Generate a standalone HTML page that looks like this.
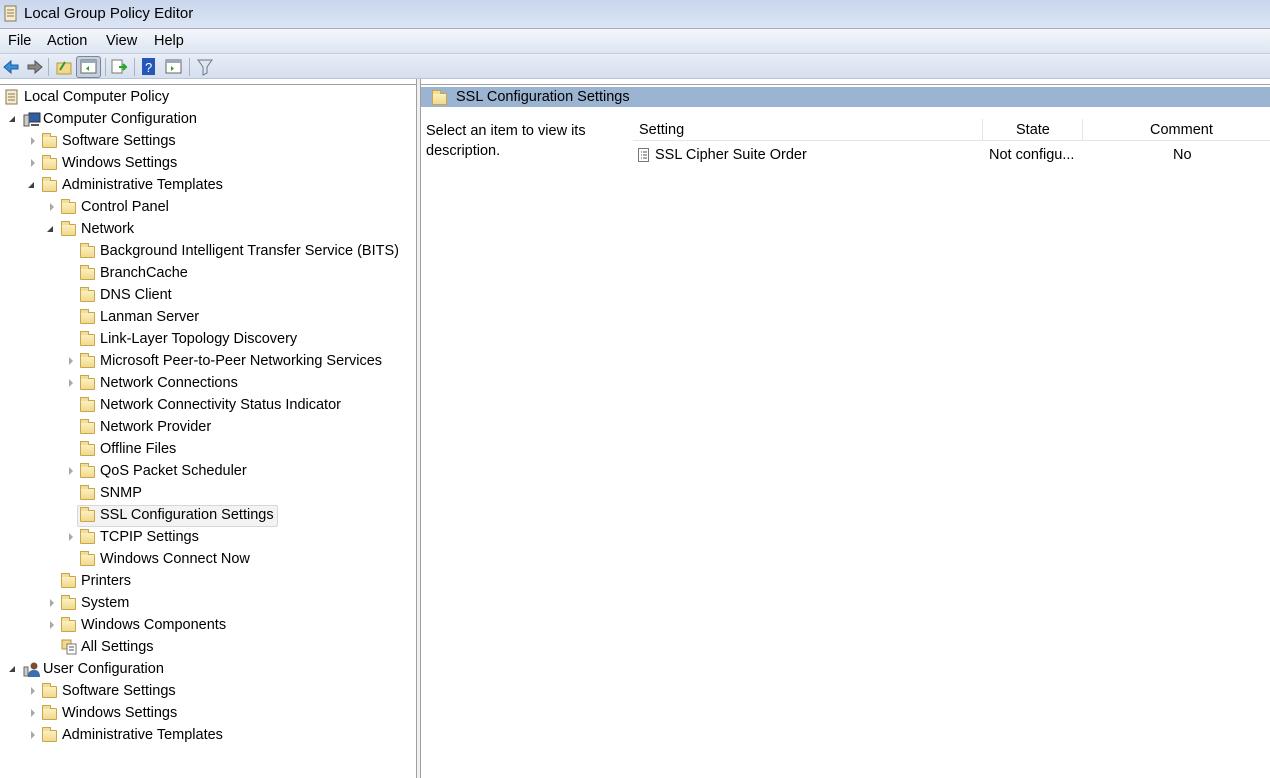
<!DOCTYPE html>
<html><head><style>
*{margin:0;padding:0;box-sizing:border-box}
body{width:1270px;height:778px;overflow:hidden;background:#fff;font-family:"Liberation Sans",sans-serif;font-size:14.5px;color:#000;position:relative}
.title{position:absolute;left:0;top:0;width:1270px;height:28px;background:linear-gradient(#c9d6ec,#dbe5f5);}
.title span{position:absolute;left:24px;top:5px;font-size:15px}
.menu{position:absolute;left:0;top:28px;width:1270px;height:25px;background:linear-gradient(#f4f7fc,#dde5f1);border-top:1px solid #aab;}
.menu span{position:absolute;top:4px}
.tool{position:absolute;left:0;top:53px;width:1270px;height:26px;background:linear-gradient(#e9eef7,#d6dfee);border-top:1px solid #c4cede;border-bottom:1px solid #b9c4d6}
.sep{position:absolute;top:4px;width:1px;height:18px;background:#a8b3c4}
.left{position:absolute;left:0;top:84px;width:416px;height:694px;background:#fff;border-top:1px solid #a0a0a0}
.split{position:absolute;left:416px;top:79px;width:5px;height:699px;background:#f0f0f0;border-left:1px solid #a0a0a0;border-right:1px solid #a0a0a0}
.right{position:absolute;left:421px;top:84px;width:849px;height:694px;background:#fff;border-top:1px solid #a0a0a0}
.hdr{position:absolute;left:0;top:2px;width:849px;height:20px;background:#9ab4d1}
.row{position:absolute;height:22px;line-height:22px;white-space:nowrap}
.f{position:absolute;width:15px;height:12px;background:linear-gradient(#fcf0c0,#f1d98d);border:1px solid #c9a64c;border-radius:1px}
.f:before{content:"";position:absolute;left:-1px;top:-4px;width:7px;height:3px;background:#f1dd9c;border:1px solid #c9a64c;border-bottom:none}
.ac{position:absolute;width:0;height:0;border-top:4px solid transparent;border-bottom:4px solid transparent;border-left:4px solid #a8a8a8}
.ae{position:absolute;width:0;height:0;border-left:6px solid transparent;border-bottom:6px solid #404040}
</style></head><body>
<div class="title">
<svg style="position:absolute;left:3px;top:5px" width="16" height="18"><rect x="2" y="1" width="11" height="15" fill="#f6edd0" stroke="#8a7850"/><path d="M4 5h7M4 8h7M4 11h7" stroke="#8a7850"/></svg>
<span>Local Group Policy Editor</span></div>
<div class="menu"><span style="left:8px">File</span><span style="left:47px">Action</span><span style="left:106px">View</span><span style="left:154px">Help</span></div>
<div class="tool">
<svg style="position:absolute;left:2px;top:4px" width="42" height="18"><path d="M2 9l7-6v4h7v4H9v4z" fill="#3a8fd9" stroke="#1e5e9e"/><path d="M40 9l-7-6v4h-7v4h7v4z" fill="#888" stroke="#555"/></svg>
<div class="sep" style="left:48px"></div>
<svg style="position:absolute;left:55px;top:4px" width="18" height="18"><rect x="2" y="5" width="14" height="11" fill="#f2d88a" stroke="#b9963e"/><path d="M5 12l5-8" stroke="#2b9b2b" stroke-width="2"/></svg>
<div style="position:absolute;left:76px;top:2px;width:25px;height:22px;border:1px solid #7a8599;border-radius:3px;background:#c5cfe0"></div>
<svg style="position:absolute;left:80px;top:5px" width="18" height="16"><rect x="1" y="1" width="15" height="13" fill="#fff" stroke="#666"/><rect x="1" y="1" width="15" height="3" fill="#9ab"/><path d="M9 7l-3 2.5 3 2.5z" fill="#2a2"/></svg>
<div class="sep" style="left:105px"></div>
<svg style="position:absolute;left:110px;top:4px" width="18" height="18"><rect x="2" y="2" width="10" height="13" fill="#fff" stroke="#777"/><path d="M9 9h7M13 6l3 3-3 3" stroke="#2a2" stroke-width="2" fill="none"/></svg>
<div class="sep" style="left:134px"></div>
<svg style="position:absolute;left:141px;top:3px" width="16" height="20"><rect x="1" y="1" width="13" height="17" fill="#2457b8"/><text x="4" y="15" fill="#fff" font-size="13" font-family="Liberation Sans">?</text></svg>
<svg style="position:absolute;left:165px;top:5px" width="18" height="16"><rect x="1" y="1" width="15" height="13" fill="#fff" stroke="#666"/><rect x="1" y="1" width="15" height="3" fill="#9ab"/><path d="M6 7l3 2.5-3 2.5z" fill="#2a2"/></svg>
<div class="sep" style="left:189px"></div>
<svg style="position:absolute;left:196px;top:4px" width="18" height="18"><path d="M2 2h14l-5 7v6l-4 2V9z" fill="#dfe6ee" stroke="#66778a"/></svg>
</div>
<div class="left">
<div style="position:absolute;left:77px;top:420px;width:201px;height:22px;border:1px solid #d7d7d7;border-radius:2px;background:#f3f3f3"></div>
</div>
<div id="tree" style="position:absolute;left:0;top:86px;width:416px"></div>
<div class="split"></div>
<div class="right">
<div class="hdr"><div class="f" style="left:11px;top:6px"></div><span style="position:absolute;left:35px;top:2px;font-size:14.5px">SSL Configuration Settings</span></div>
<div style="position:absolute;left:210px;top:22px;width:639px;height:4px;background:#fff"></div>
<div class="row" style="left:5px;top:36px;line-height:20px;white-space:normal;width:190px">Select an item to view its description.</div>
<div style="position:absolute;left:212px;top:34px;width:637px;height:22px;border-bottom:1px solid #e5e5e5"></div>
<div style="position:absolute;left:561px;top:34px;width:1px;height:22px;background:#e5e5e5"></div>
<div style="position:absolute;left:661px;top:34px;width:1px;height:22px;background:#e5e5e5"></div>
<div class="row" style="left:218px;top:34px">Setting</div>
<div class="row" style="left:595px;top:34px">State</div>
<div class="row" style="left:729px;top:34px">Comment</div>
<svg style="position:absolute;left:216px;top:62px" width="14" height="16"><rect x="1.5" y="1.5" width="10" height="13" fill="#fff" stroke="#777"/><path d="M4 5h1M4 8h1M4 11h1M6 5h4M6 8h4M6 11h4" stroke="#555"/></svg>
<div class="row" style="left:234px;top:59px">SSL Cipher Suite Order</div>
<div class="row" style="left:568px;top:59px">Not configu...</div>
<div class="row" style="left:752px;top:59px">No</div>
</div>
<script>
var items=[
[0,"Local Computer Policy","pol",0],
[1,"Computer Configuration","comp",2],
[2,"Software Settings","f",1],[2,"Windows Settings","f",1],[2,"Administrative Templates","f",2],
[3,"Control Panel","f",1],[3,"Network","f",2],
[4,"Background Intelligent Transfer Service (BITS)","f",0],[4,"BranchCache","f",0],[4,"DNS Client","f",0],[4,"Lanman Server","f",0],[4,"Link-Layer Topology Discovery","f",0],[4,"Microsoft Peer-to-Peer Networking Services","f",1],[4,"Network Connections","f",1],[4,"Network Connectivity Status Indicator","f",0],[4,"Network Provider","f",0],[4,"Offline Files","f",0],[4,"QoS Packet Scheduler","f",1],[4,"SNMP","f",0],[4,"SSL Configuration Settings","f",0],[4,"TCPIP Settings","f",1],[4,"Windows Connect Now","f",0],
[3,"Printers","f",0],[3,"System","f",1],[3,"Windows Components","f",1],[3,"All Settings","all",0],
[1,"User Configuration","user",2],
[2,"Software Settings","f",1],[2,"Windows Settings","f",1],[2,"Administrative Templates","f",1]];
var h="";
items.forEach(function(it,i){
 var l=it[0],y=i*22;
 var ix=l==0?4:4+l*19, tx=l==0?24:24+l*19;
 if(it[3]==1)h+='<div class="ac" style="left:'+(ix-11)+'px;top:'+(y+7)+'px"></div>';
 if(it[3]==2)h+='<div class="ae" style="left:'+(ix-14)+'px;top:'+(y+8)+'px"></div>';
 if(it[2]=="f")h+='<div class="f" style="left:'+ix+'px;top:'+(y+6)+'px"></div>';
 else if(it[2]=="pol")h+='<svg style="position:absolute;left:'+ix+'px;top:'+(y+3)+'px" width="16" height="17"><rect x="2" y="1" width="11" height="14" fill="#f6edd0" stroke="#8a7850"/><path d="M4 5h7M4 8h7M4 11h7" stroke="#8a7850"/></svg>';
 else if(it[2]=="comp")h+='<svg style="position:absolute;left:'+ix+'px;top:'+(y+3)+'px" width="18" height="17"><rect x="6" y="2" width="11" height="9" fill="#2d5fa8" stroke="#333"/><rect x="1" y="4" width="5" height="11" fill="#ccc" stroke="#555"/><path d="M8 14h8" stroke="#555" stroke-width="2"/></svg>';
 else if(it[2]=="user")h+='<svg style="position:absolute;left:'+ix+'px;top:'+(y+3)+'px" width="18" height="17"><circle cx="11" cy="5" r="3.5" fill="#7a5030"/><path d="M5 16c0-6 3-7 6-7s6 1 6 7z" fill="#3a6fb0"/><rect x="1" y="6" width="4" height="9" fill="#ccc" stroke="#666"/></svg>';
 else h+='<svg style="position:absolute;left:'+ix+'px;top:'+(y+2)+'px" width="18" height="18"><rect x="1" y="2" width="9" height="9" fill="#f2d88a" stroke="#b9963e"/><rect x="6" y="6" width="9" height="10" fill="#fff" stroke="#777"/><path d="M8 9h5M8 12h5" stroke="#555"/></svg>';
 h+='<div class="row" style="left:'+tx+'px;top:'+y+'px">'+it[1]+'</div>';
});
document.getElementById("tree").innerHTML=h;
</script>
</body></html>
